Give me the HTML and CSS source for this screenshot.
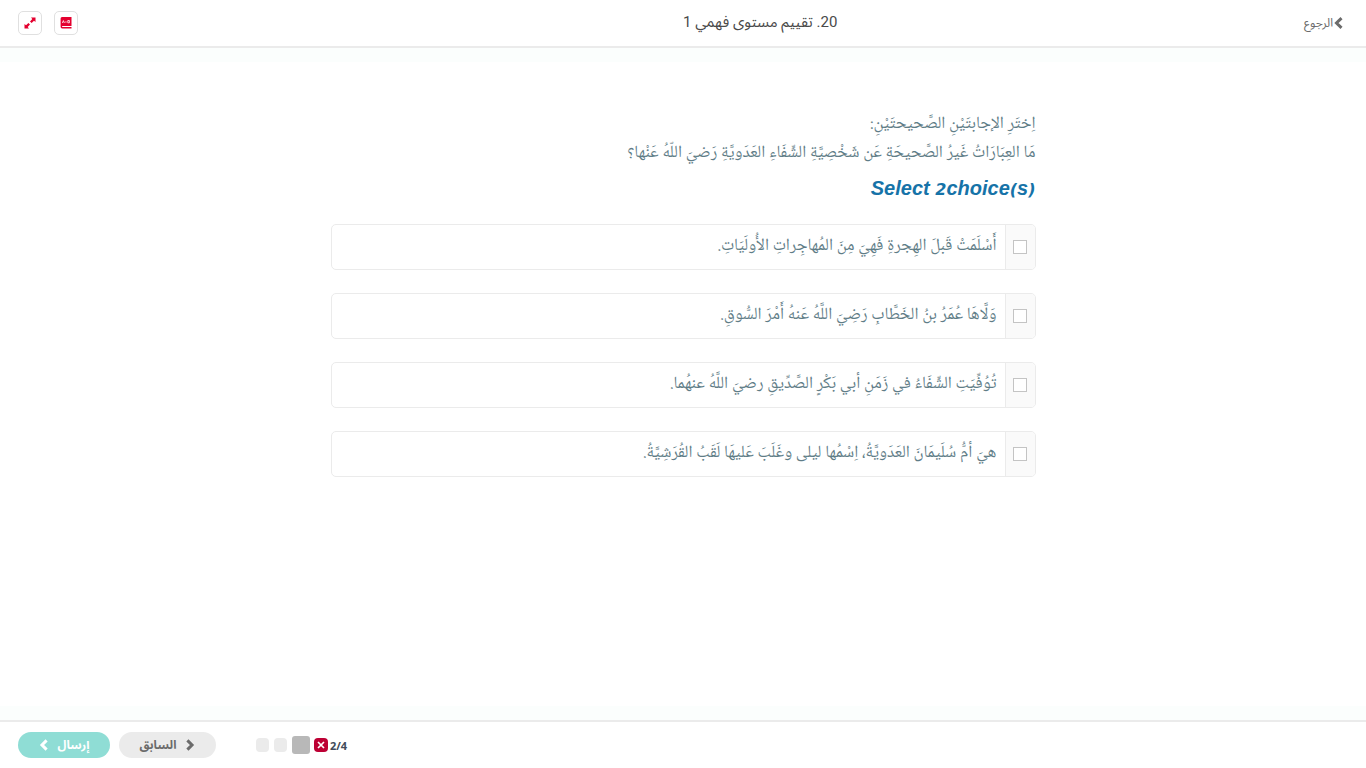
FILE: index.html
```html
<!DOCTYPE html>
<html lang="ar" dir="rtl">
<head>
<meta charset="utf-8">
<meta name="viewport" content="width=device-width, initial-scale=1">
<title>تقييم مستوى فهمي 1</title>
<link rel="stylesheet" href="styles.css">
</head>
<body>
<header class="topbar">
  <div class="topbar-main">
    <a class="back" href="#"><svg class="back-icon" viewBox="0 0 10 12" aria-hidden="true"><path d="M7.500 1.200 2.500 6l5 4.800"/></svg>الرجوع</a>
    <h1 class="title">20. تقييم مستوى فهمي 1</h1>
  </div>
  <div class="tools">
    <button class="tool" type="button" aria-label="القاموس"><svg width="12" height="12" viewBox="0 0 12 12" aria-hidden="true"><path fill="#e4002f" d="M2 0h9.500v9H2.500a.5.5 0 0 0 0 1h9v1.500H2.200A1.700 1.700 0 0 1 .6 9.800V1.500A1.500 1.500 0 0 1 2 0z"/><path fill="none" stroke="#fff" stroke-width=".8" d="m2.400 6 1-2.400 1 2.400M5.200 5h1.500M7.800 3.500h1.600v2.300H7.800z"/></svg></button>
    <button class="tool" type="button" aria-label="ملء الشاشة"><svg width="12" height="12" viewBox="0 0 12 12" aria-hidden="true"><path fill="#e4002f" d="M7 .5h4.500V5L10 3.700 7.600 6 6 4.400 8.300 2zM.5 7 2 8.300 4.400 6 6 7.600 3.700 10 5 11.500H.5z"/></svg></button>
  </div>
</header>
<main class="content">
  <form class="quiz" id="quiz">
    <p class="question">اِختَرِ الإجابتَيْنِ الصَّحيحتَيْنِ:</p>
    <p class="question">مَا العِبَارَاتُ غَيرُ الصَّحيحَةِ عَن شَخْصِيَّةِ الشِّفَاءِ العَدَويَّةِ رَضيَ اللّهُ عَنْها؟</p>
    <p class="hint" dir="ltr">Select <span class="count">2</span>choice<span class="paren">(</span>s<span class="paren">)</span></p>
    <div class="choices">
      <label class="choice"><span class="mark"><input class="check" type="checkbox"></span><span class="answer">أَسْلَمَتْ قَبلَ الهِجرةِ فَهِيَ مِنَ المُهاجِراتِ الأُولَيَاتِ.</span></label>
      <label class="choice"><span class="mark"><input class="check" type="checkbox"></span><span class="answer">وَلَّاهَا عُمَرُ بنُ الخَطَّابِ رَضِيَ اللَّهُ عَنهُ أَمْرَ السُّوقِ.</span></label>
      <label class="choice"><span class="mark"><input class="check" type="checkbox"></span><span class="answer">تُوُفِّيَتِ الشِّفَاءُ في زَمَنِ أبي بَكْرٍ الصَّدِّيقِ رضيَ اللَّهُ عنهُما.</span></label>
      <label class="choice"><span class="mark"><input class="check" type="checkbox"></span><span class="answer">هيَ أمُّ سُلَيمَانَ العَدَويَّةُ، اِسْمُها ليلى وغَلَبَ عَليهَا لَقَبُ القُرَشِيَّةُ.</span></label>
    </div>
  </form>
</main>
<footer class="bottombar" dir="ltr">
  <button class="pill submit" type="submit" form="quiz"><svg class="pill-icon" viewBox="0 0 10 12" aria-hidden="true"><path d="M7.600 1.400 3 6l4.600 4.600"/></svg>إرسال</button>
  <button class="pill previous" type="button">السابق<svg class="pill-icon" viewBox="0 0 10 12" aria-hidden="true"><path d="M2.400 1.400 7 6l-4.600 4.600"/></svg></button>
  <div class="steps">
    <span class="step"></span>
    <span class="step"></span>
    <span class="step current"></span>
    <span class="step wrong"><svg width="8" height="8" viewBox="0 0 8 8" aria-hidden="true"><path stroke="#fff" stroke-width="1.700" d="m1 1 6 6M7 1 1 7"/></svg></span>
    <span class="progress">2/4</span>
  </div>
</footer>
</body>
</html>
```
FILE: styles.css
```css
* { box-sizing: border-box; }
body {
  margin: 0;
  min-height: 100vh;
  display: flex;
  flex-direction: column;
  background: #fff;
  color: #4a4a4a;
  font-family: "Noto Sans", "Noto Sans Arabic", "DejaVu Sans", sans-serif;
}
button { font: inherit; cursor: pointer; }
.topbar {
  display: grid;
  grid-template-columns: 1fr 1fr;
  align-items: center;
  height: 48px;
  border-bottom: 2px solid #ebebeb;
}
.topbar-main {
  display: flex;
  align-items: center;
  justify-content: space-between;
  padding-right: 22px;
}
.back {
  display: flex;
  align-items: center;
  gap: 1px;
  color: #6b6b6b;
  font-size: 12px;
  text-decoration: none;
}
.back-icon, .pill-icon {
  width: 10px;
  height: 12px;
  fill: none;
  stroke: currentColor;
  stroke-width: 3;
}
.title {
  margin: 0;
  padding-bottom: 2px;
  font: 400 15px/20px Roboto, "Noto Sans Arabic", sans-serif;
}
.tools {
  display: flex;
  justify-content: flex-end;
  gap: 12px;
  padding-left: 18px;
}
.tool {
  display: grid;
  place-items: center;
  width: 24px;
  height: 24px;
  padding: 0;
  border: 1px solid #e0e0e0;
  border-radius: 5px;
  background: #fff;
}
.content {
  flex: 1;
  padding: 62px 24px 24px;
  background: linear-gradient(#fbfefd 0 14px, #fff 14px calc(100% - 14px), #fbfefd calc(100% - 14px));
}
.quiz { max-width: 705px; margin: 0 auto; }
.question, .answer {
  color: #5f7d87;
  font-family: "Noto Naskh Arabic", Amiri, Scheherazade, "Noto Sans Arabic", serif;
  font-size: 17px;
}
.question { margin: 0; line-height: 29px; }
.hint {
  margin: 8px 0 0;
  color: #1673a8;
  font: italic bold 20px/24px "Liberation Sans", sans-serif;
  text-align: right;
}
.count, .paren { font-family: "DejaVu Sans", sans-serif; font-size: 16px; }
.choices { display: grid; gap: 23px; margin-top: 22px; }
.choice {
  display: flex;
  min-height: 46px;
  border: 1px solid #ebebeb;
  border-radius: 5px;
  overflow: hidden;
}
.mark {
  display: grid;
  place-items: center;
  width: 30px;
  border-left: 1px solid #ebebeb;
  background: #fafafa;
}
.check {
  appearance: none;
  width: 14px;
  height: 14px;
  margin: 0;
  border: 1px solid #c4c4c4;
  background: #fff;
}
.check:checked { background: #1673a8; }
.answer {
  align-self: center;
  padding: 0 8px;
  line-height: 24px;
}
.bottombar {
  display: flex;
  align-items: center;
  height: 48px;
  padding: 0 18px;
  border-top: 2px solid #ebebeb;
}
.pill {
  display: flex;
  align-items: center;
  justify-content: center;
  gap: 9px;
  height: 26px;
  padding: 0 18px;
  border: 0;
  border-radius: 13px;
  font-size: 12px;
  font-weight: 700;
}
.submit { min-width: 92px; background: #8fddd5; color: #fff; }
.previous { min-width: 97px; margin-left: 9px; background: #ebebeb; color: #6b6b6b; }
.steps { display: flex; align-items: center; gap: 5px; margin-left: 40px; }
.step {
  display: grid;
  place-items: center;
  width: 13px;
  height: 14px;
  border-radius: 4px;
  background: #ebebeb;
}
.current { width: 18px; height: 18px; border-radius: 3px; background: #b8b8b8; }
.wrong { width: 14px; margin-left: -1px; background: #bd0034; }
.progress { margin-left: -3px; color: #414b5a; font-size: 11px; font-weight: 700; }
```
